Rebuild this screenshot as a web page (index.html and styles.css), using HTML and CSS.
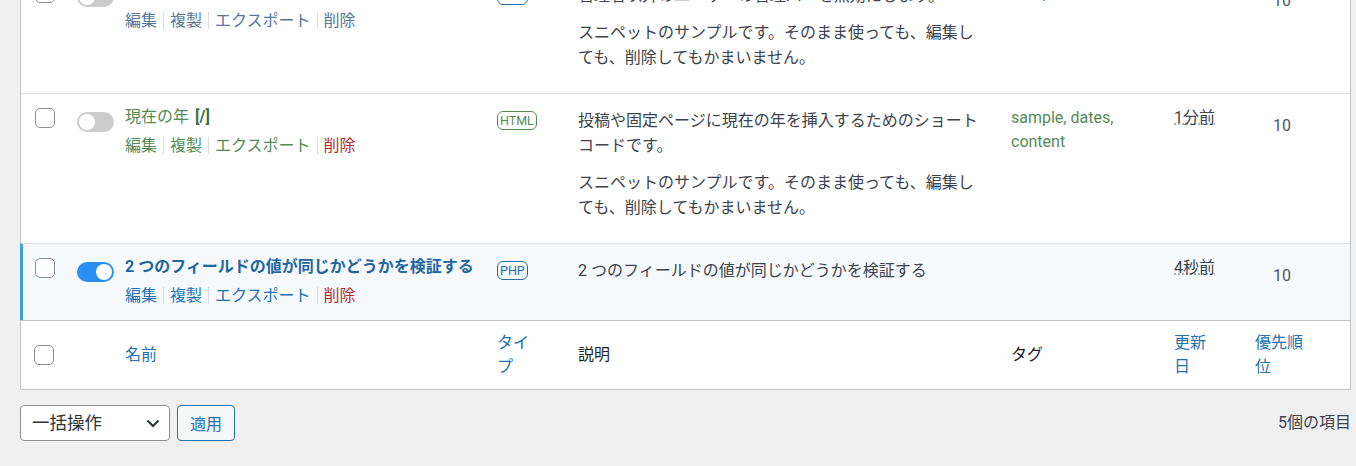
FILE: index.html
```html
<!DOCTYPE html>
<html lang="ja">
<head>
<meta charset="utf-8">
<title>スニペット</title>
<link rel="stylesheet" href="styles.css">
</head>
<body>
<div class="wrap">
  <table class="snippets">
    <colgroup>
      <col class="c-cb"><col class="c-act"><col class="c-name"><col class="c-type">
      <col class="c-desc"><col class="c-tags"><col class="c-mod"><col class="c-prio">
    </colgroup>
    <tbody>
      <tr class="row inactive php first">
        <td class="cb"><span class="chk"></span></td>
        <td class="act"><span class="toggle"></span></td>
        <td class="name">
          <div class="title"><a href="#">管理バーを無効にする</a></div>
          <div class="row-actions"><a href="#">編集</a><span class="sep"></span><a href="#">複製</a><span class="sep"></span><a href="#">エクスポート</a><span class="sep"></span><a href="#" class="del">削除</a></div>
        </td>
        <td class="type"><span class="badge php-badge">PHP</span></td>
        <td class="desc">
          <p>管理者以外のユーザーの管理バーを無効にします。</p>
          <p>スニペットのサンプルです。そのまま使っても、編集しても、削除してもかまいません。</p>
        </td>
        <td class="tags"><a href="#">sample, admin-bar</a></td>
        <td class="mod"><span class="time">1分前</span></td>
        <td class="prio"><span class="num">10</span></td>
      </tr>
      <tr class="row inactive html">
        <td class="cb"><span class="chk"></span></td>
        <td class="act"><span class="toggle"></span></td>
        <td class="name">
          <div class="title"><a href="#">現在の年</a><b class="sc">[/]</b></div>
          <div class="row-actions"><a href="#">編集</a><span class="sep"></span><a href="#">複製</a><span class="sep"></span><a href="#">エクスポート</a><span class="sep"></span><a href="#" class="del">削除</a></div>
        </td>
        <td class="type"><span class="badge html-badge">HTML</span></td>
        <td class="desc">
          <p>投稿や固定ページに現在の年を挿入するためのショートコードです。</p>
          <p>スニペットのサンプルです。そのまま使っても、編集しても、削除してもかまいません。</p>
        </td>
        <td class="tags"><a href="#">sample</a>, <a href="#">dates</a>, <a href="#">content</a></td>
        <td class="mod"><span class="time">1分前</span></td>
        <td class="prio"><span class="num">10</span></td>
      </tr>
      <tr class="row active php">
        <td class="cb"><span class="chk"></span></td>
        <td class="act"><span class="toggle on"></span></td>
        <td class="name">
          <div class="title"><a href="#">2 つのフィールドの値が同じかどうかを検証する</a></div>
          <div class="row-actions"><a href="#">編集</a><span class="sep"></span><a href="#">複製</a><span class="sep"></span><a href="#">エクスポート</a><span class="sep"></span><a href="#" class="del">削除</a></div>
        </td>
        <td class="type"><span class="badge php-badge">PHP</span></td>
        <td class="desc"><p>2 つのフィールドの値が同じかどうかを検証する</p></td>
        <td class="tags"></td>
        <td class="mod"><span class="time">4秒前</span></td>
        <td class="prio"><span class="num">10</span></td>
      </tr>
    </tbody>
    <tfoot>
      <tr>
        <td class="cb"><span class="chk"></span></td>
        <td></td>
        <td><a class="sort" href="#"><span class="lbl">名前</span><span class="ind"></span></a></td>
        <td><a class="sort" href="#"><span class="lbl">タイプ</span><span class="ind"></span></a></td>
        <td class="plain">説明</td>
        <td class="plain">タグ</td>
        <td><a class="sort" href="#"><span class="lbl">更新日</span><span class="ind"></span></a></td>
        <td><a class="sort" href="#"><span class="lbl">優先順位</span><span class="ind"></span></a></td>
      </tr>
    </tfoot>
  </table>
  <div class="tablenav">
    <div class="bulk">
      <div class="select"><span>一括操作</span>
        <svg width="14" height="9" viewBox="0 0 14 9"><path d="M1.5 1.5 L7 7 L12.5 1.5" fill="none" stroke="#2c3338" stroke-width="2"/></svg>
      </div>
      <button class="btn" type="button">適用</button>
    </div>
    <div class="count">5個の項目</div>
  </div>
</div>
</body>
</html>
```
FILE: styles.css
```css
* { box-sizing: border-box; }
html, body { height: 100%; }
body {
  margin: 0;
  background: #f0f0f1;
  color: #3c434a;
  font-family: Roboto, "Noto Sans CJK JP", sans-serif;
  font-size: 16px;
  line-height: 24px;
  overflow: hidden;
}
a { text-decoration: none; }
.wrap { padding: 0 5px 0 20px; margin-top: -32px; }

.snippets {
  width: 1331px;
  table-layout: fixed;
  border-collapse: separate;
  border-spacing: 0;
  background: #fff;
  border: 1px solid #c3c4c7;
}
.c-cb { width: 44px; }
.c-act { width: 48px; }
.c-name { width: 372px; }
.c-type { width: 81px; }
.c-desc { width: 433px; }
.c-tags { width: 163px; }
.c-mod { width: 81px; }
.c-prio { width: 107px; }

.snippets td { vertical-align: top; padding: 10px 12px; }
.row td { border-top: 1px solid #e1e1e1; }
.row.first td { border-top: 0; }

.row td.cb { padding: 14px 0 0 14px; }
.row td.act { padding: 18px 0 0 12px; }
.row td.name { padding: 11px 12px 12px; }
.row td.type { padding: 14px 12px 0; }
.row td.desc { padding: 14px 12px 11px; line-height: 25px; }
.row td.tags { padding: 12px 12px 0; }
.row td.mod { padding: 12px 12px 0; }
.row td.prio { padding: 20px 12px 0 30px; }

.desc p { margin: 0 0 12px; }

.chk {
  display: block;
  width: 20px;
  height: 20px;
  border: 1px solid #8c8f94;
  border-radius: 5px;
  background: #fff;
}

.toggle {
  display: block;
  position: relative;
  width: 37px;
  height: 20px;
  border-radius: 10px;
  background: #cccccc;
}
.toggle::after {
  content: "";
  position: absolute;
  top: 2px;
  left: 2px;
  width: 16px;
  height: 16px;
  border-radius: 50%;
  background: #fff;
}
.toggle.on { background: #2b8ff0; }
.toggle.on::after { left: 19px; }

.title { line-height: 24px; white-space: nowrap; }
.sc { margin-left: 6px; font-weight: 700; }
.row-actions { margin-top: 5px; line-height: 24px; white-space: nowrap; }
.sep {
  display: inline-block;
  width: 1px;
  height: 17px;
  margin: 0 6px;
  background: #dcdcde;
  vertical-align: -3px;
}
.row-actions a.del { color: #b32d2e; }

.inactive.php a { color: #557799; }
.html a { color: #548b54; }
.active a { color: #2271b1; }
.active .title a { font-weight: 700; color: #1f65a0; }
.html .sc { color: #3f6f3f; }
.tags { color: #548b54; }

.badge {
  display: inline-block;
  font-size: 12.5px;
  line-height: 17px;
  padding: 0 2px;
  border: 1px solid;
  border-radius: 6px;
}
.php-badge { color: #2271b1; border-color: #2271b1; }
.html-badge { color: #548b54; border-color: #548b54; }

.time {
  color: #3c434a;
  text-decoration: underline dotted #9aa0a6;
}
.num { color: #50575e; }

.active td { background: #f6fafd; }
.active td.cb { box-shadow: inset 2px 0 0 #3c9fd6, -1px 0 0 #3c9fd6; }

tfoot td {
  border-top: 1px solid #c3c4c7;
  vertical-align: middle !important;
  color: #1d2327;
}
tfoot td.cb { padding: 0 0 0 13px; }
.sort { display: flex; color: #2271b1; }
.sort .ind { flex: none; width: 22px; }

.tablenav {
  margin-top: 15px;
  display: flex;
  align-items: center;
  justify-content: space-between;
}
.bulk { display: flex; gap: 7px; }
.select {
  width: 150px;
  height: 36px;
  display: flex;
  align-items: center;
  justify-content: space-between;
  padding: 0 9px 0 11px;
  border: 1px solid #8c8f94;
  border-radius: 4px;
  background: #fff;
  color: #2c3338;
  font-size: 17.5px;
}
.btn {
  height: 36px;
  padding: 0 12px;
  border: 1px solid #2271b1;
  border-radius: 4px;
  background: #f6f7f7;
  color: #2271b1;
  font-family: Roboto, "Noto Sans CJK JP", sans-serif;
  font-size: 16px;
}
.count { color: #3c434a; font-size: 16px; }
```
